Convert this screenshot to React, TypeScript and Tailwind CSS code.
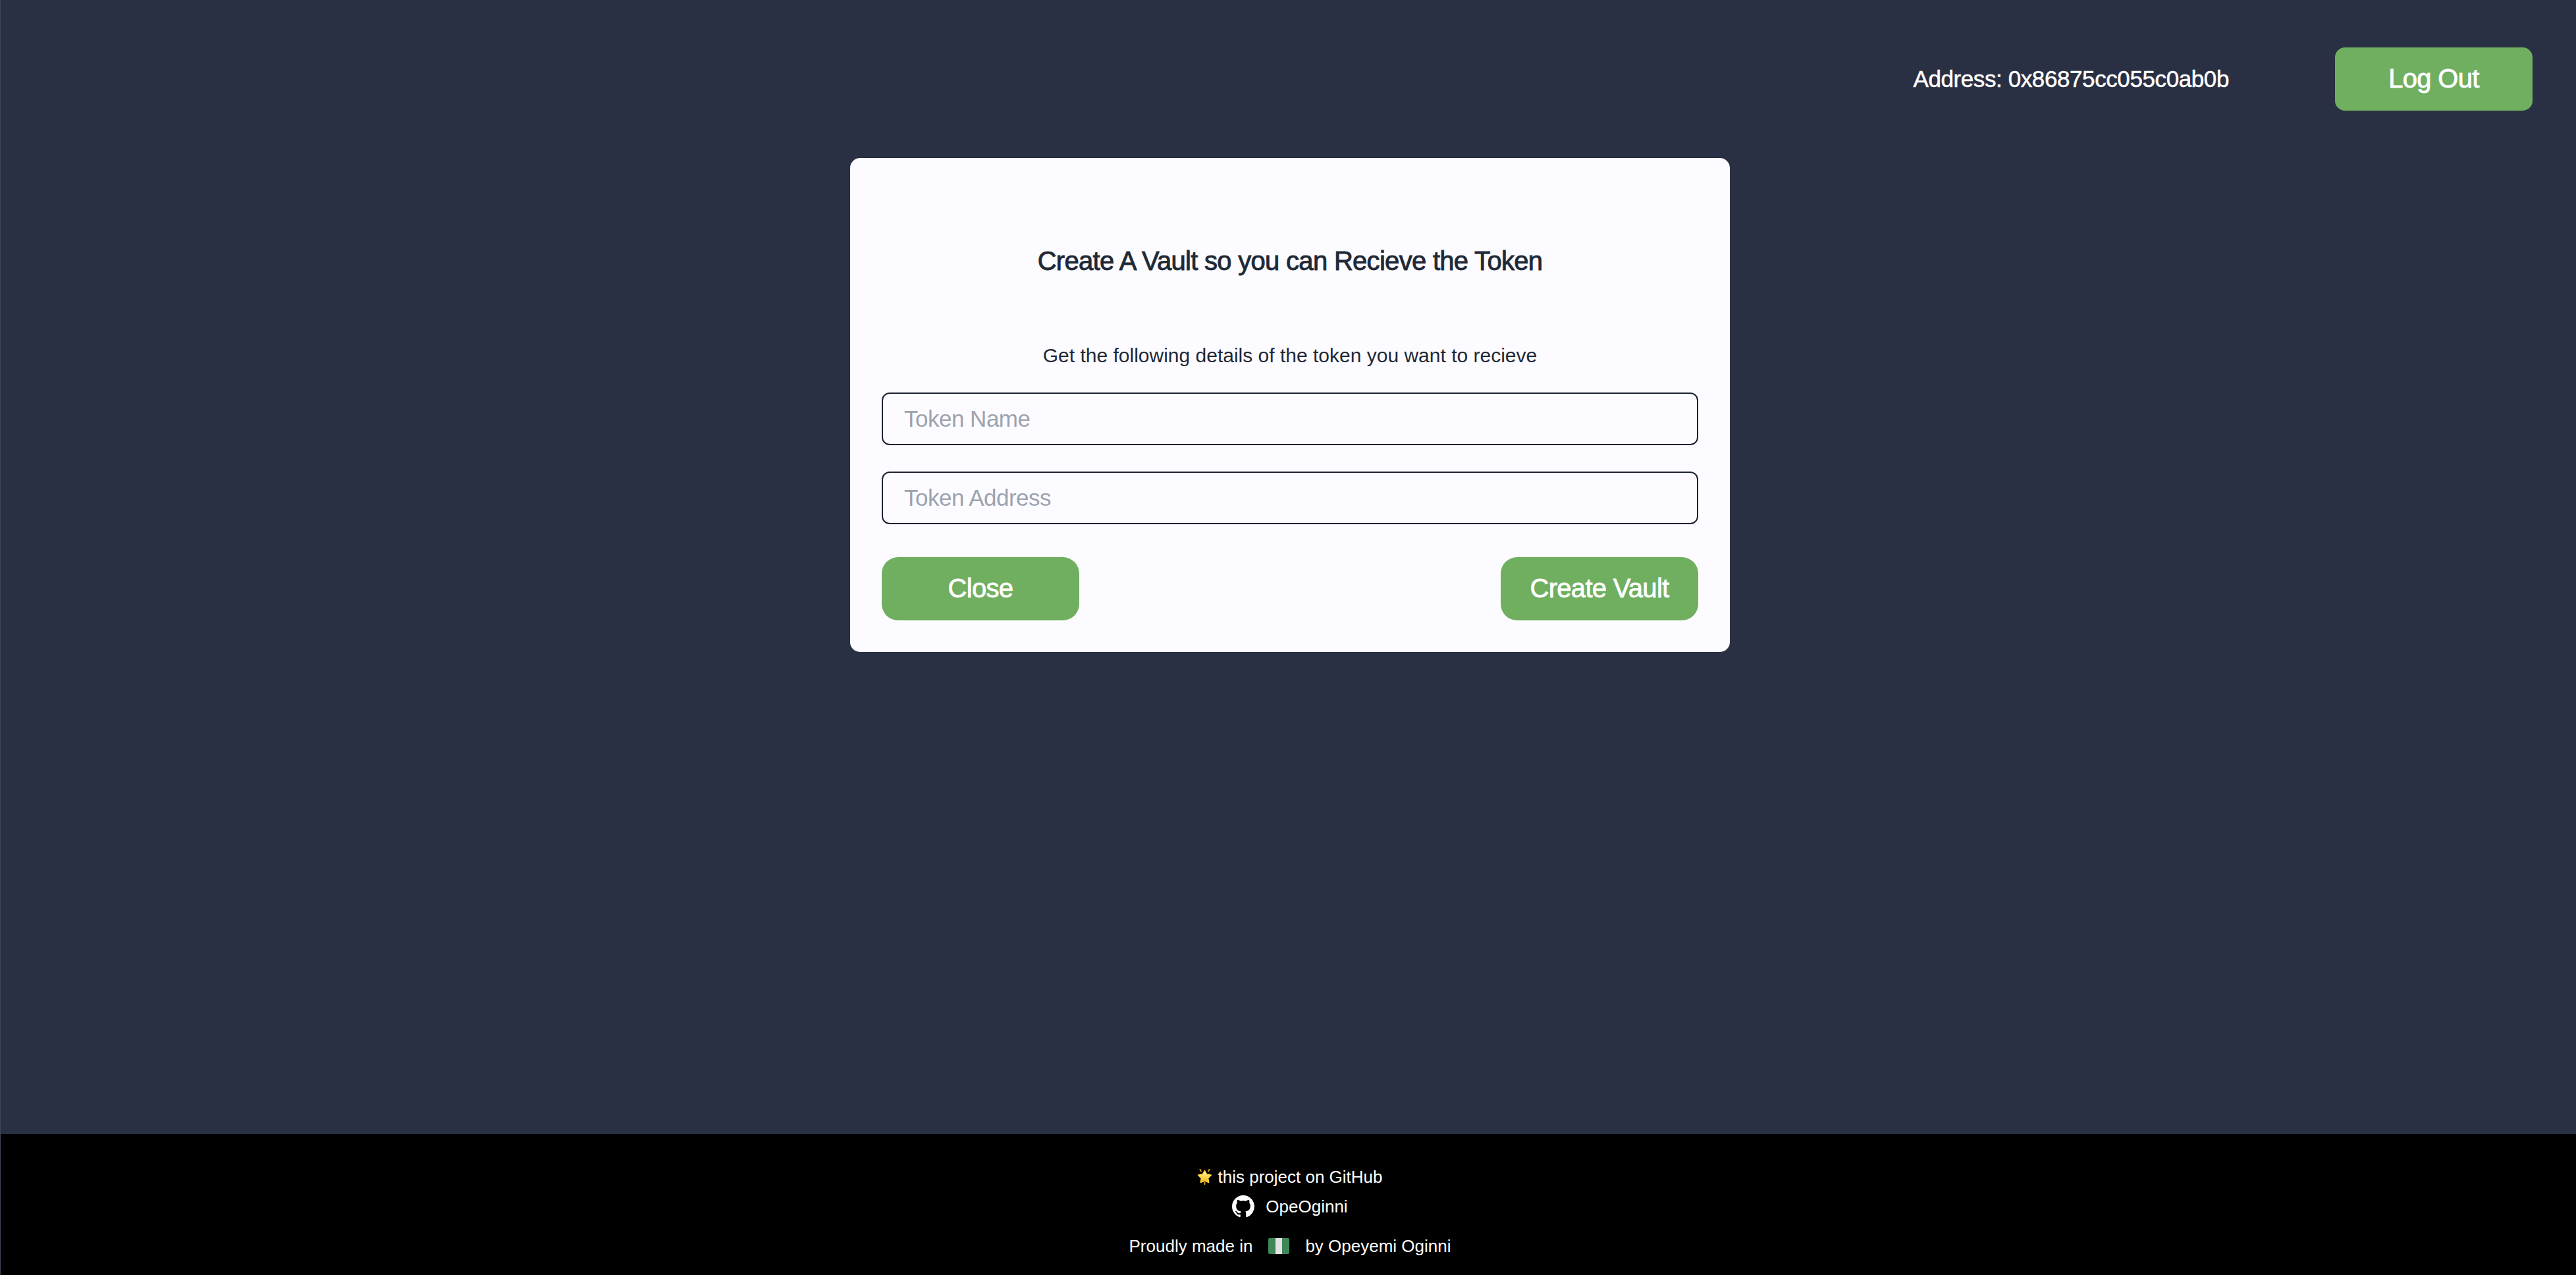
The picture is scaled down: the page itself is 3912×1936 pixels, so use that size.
import React from 'react';

// Apple-style glowing star, the emoji font isn't available
const GlowingStar = () => (
  <svg width="23" height="24" viewBox="0 0 23 24" className="shrink-0">
    <defs>
      <linearGradient id="starFill" x1="0" y1="0" x2="0" y2="1">
        <stop offset="0" stopColor="#fff8c4" />
        <stop offset="0.55" stopColor="#ffd644" />
        <stop offset="1" stopColor="#f7a81c" />
      </linearGradient>
    </defs>
    <path d="M11.5 2.5L14.7 8 21.5 9.2 16.7 14 17.7 20.5 11.5 17.8 5.3 20.5 6.3 14 1.5 9.2 8.3 8z" fill="url(#starFill)" stroke="#ffd644" strokeWidth="1.4" strokeLinejoin="round" />
    <path d="M4.5 .8l1.4 2.4M18.5 .8l-1.4 2.4M11.5 20.5v2.8" stroke="#e8a312" strokeWidth="1.8" strokeLinecap="round" />
  </svg>
);

const GithubMark = () => (
  <svg width="34" height="34" viewBox="0 0 16 16" fill="#ffffff" className="shrink-0">
    <path d="M8 0C3.58 0 0 3.58 0 8c0 3.54 2.29 6.53 5.47 7.59.4.07.55-.17.55-.38 0-.19-.01-.82-.01-1.49-2.01.37-2.53-.49-2.69-.94-.09-.23-.48-.94-.82-1.13-.28-.15-.68-.52-.01-.53.63-.01 1.08.58 1.23.82.72 1.21 1.87.87 2.33.66.07-.52.28-.87.51-1.07-1.78-.2-3.64-.89-3.64-3.95 0-.87.31-1.59.82-2.15-.08-.2-.36-1.02.08-2.12 0 0 .67-.21 2.2.82.64-.18 1.32-.27 2-.27s1.36.09 2 .27c1.53-1.04 2.2-.82 2.2-.82.44 1.1.16 1.92.08 2.12.51.56.82 1.27.82 2.15 0 3.07-1.87 3.75-3.65 3.95.29.25.54.73.54 1.48 0 1.07-.01 1.93-.01 2.2 0 .21.15.46.55.38A8.013 8.013 0 0016 8c0-4.42-3.58-8-8-8z" />
  </svg>
);

const NigeriaFlag = () => (
  <svg width="32" height="24" viewBox="0 0 32 24" className="shrink-0">
    <rect width="32" height="24" rx="2" fill="#3f8759" />
    <rect x="11" width="10" height="24" fill="#e3e3e3" />
  </svg>
);

const btnClass =
  'w-[300px] h-[96px] pb-[3px] bg-[#6faf5f] text-white text-[40px] tracking-[-0.7px] [-webkit-text-stroke:0.8px_white] leading-none flex items-center justify-center';

const inputClass =
  'w-full h-[80px] px-[32px] bg-transparent border-[2.5px] border-[#1c2230] rounded-[12px] text-[35px] tracking-[-0.5px] outline-none placeholder:text-[#9ca3af]';

export default function App() {
  return (
    <div className="min-h-[1936px] flex flex-col bg-[#2a3043] border-l border-white/10 font-['Liberation_Sans',Arial,sans-serif]">
      <header className="flex items-center justify-end pt-[72px] pr-[66px]">
        <span className="text-white text-[35px] tracking-[-0.4px] [-webkit-text-stroke:0.5px_white] mr-[161px]">Address: 0x86875cc055c0ab0b</span>
        <button className={`${btnClass} rounded-[15px]`}>Log Out</button>
      </header>

      <main className="flex-1 flex justify-center items-start pt-[72px] pl-[5px]">
        <div className="w-[1336px] h-[750px] bg-[#fcfbff] rounded-[15px] px-[48px] pt-[126px] text-[#1f2937]">
          <h2 className="text-[40px] leading-[60px] tracking-[-0.7px] [-webkit-text-stroke:0.9px_#1f2937] text-center text-[#1f2937]">Create A Vault so you can Recieve the Token</h2>
          <p className="mt-[88px] text-[30px] leading-[52px] text-center">Get the following details of the token you want to recieve</p>
          <div className="mt-[30px] flex flex-col gap-[40px]">
            <input className={inputClass} placeholder="Token Name" />
            <input className={inputClass} placeholder="Token Address" />
          </div>
          <div className="mt-[50px] flex justify-between">
            <button className={`${btnClass} rounded-[25px]`}>Close</button>
            <button className={`${btnClass} rounded-[25px]`}>Create Vault</button>
          </div>
        </div>
      </main>

      <footer className="h-[214px] bg-black text-white text-[26px] flex flex-col items-center pt-[50px] pl-[5px]">
        <div className="h-[30px] flex items-center gap-[8px]">
          <GlowingStar />
          <span>this project on GitHub</span>
        </div>
        <div className="mt-[15px] h-[30px] flex items-center gap-[17px]">
          <GithubMark />
          <span>OpeOginni</span>
        </div>
        <div className="mt-[30px] h-[30px] flex items-center gap-[24px]">
          <span>Proudly made in</span>
          <NigeriaFlag />
          <span>by Opeyemi Oginni</span>
        </div>
      </footer>
    </div>
  );
}
